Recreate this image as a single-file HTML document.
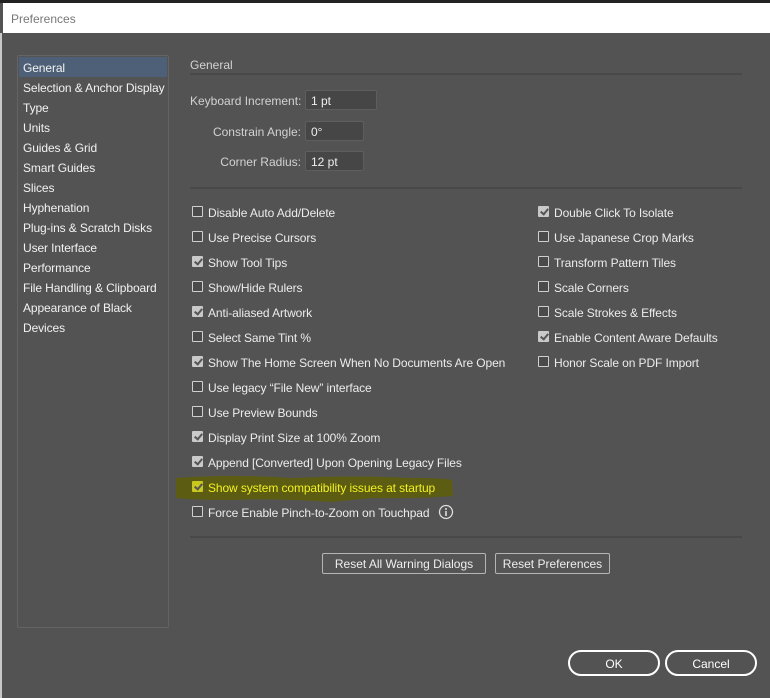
<!DOCTYPE html>
<html><head><meta charset="utf-8"><style>
*{margin:0;padding:0;box-sizing:border-box}
body{width:770px;height:698px;background:#535353;position:relative;overflow:hidden;font-family:"Liberation Sans",sans-serif;font-size:12px;color:#e3e3e3}
.a{position:absolute;white-space:nowrap}
#top{left:0;top:0;width:770px;height:3px;background:#222}
#title{left:3px;top:3px;width:767px;height:30px;background:#fff;color:#777;font-size:12px;padding:9px 0 0 8px}
#ledge{left:0;top:33px;width:2px;height:665px;background:#c8c8c8}
#side{left:17px;top:55px;width:152px;height:573px;border:1px solid #646464;border-radius:2px}
.si{position:absolute;left:5px;font-size:12px;letter-spacing:-0.1px;color:#f2f2f2;top:0}
#sel{left:1px;top:1px;width:148px;height:20px;background:#4d6077}
.lbl{color:#d2d2d2;letter-spacing:0}
.inp{background:#464646;border:1px solid #5e5e5e;border-radius:2px;height:20px;color:#eee;padding:3px 0 0 5px}
.line{height:2px;background:#484848}
.cb{position:absolute;width:11px;height:11px;border:1px solid #cfcfcf;background:#4a4a4a;border-radius:1px}
.cb.c{background:#c9c9c9;border-color:#c9c9c9}
.cb.c:after{content:"";position:absolute;left:3px;top:0px;width:3px;height:6px;border:solid #555;border-width:0 2px 2px 0;transform:rotate(40deg)}
.t{position:absolute;letter-spacing:-0.1px;color:#ececec}
.btn{position:absolute;border:1px solid #b5b5b5;border-radius:2px;text-align:center;padding-top:3px;color:#eee;background:#555}
.rb{position:absolute;border:2px solid #fff;border-radius:13px;text-align:center;color:#fff;padding-top:5px;font-size:12px}
</style></head><body>
<div class="a" id="top"></div>
<div class="a" id="title">Preferences</div>
<div class="a" id="ledge"></div>
<div class="a" id="side">
<div class="a" id="sel"></div>
<div class="si" style="top:5px">General</div>
<div class="si" style="top:25px">Selection &amp; Anchor Display</div>
<div class="si" style="top:45px">Type</div>
<div class="si" style="top:65px">Units</div>
<div class="si" style="top:85px">Guides &amp; Grid</div>
<div class="si" style="top:105px">Smart Guides</div>
<div class="si" style="top:125px">Slices</div>
<div class="si" style="top:145px">Hyphenation</div>
<div class="si" style="top:165px">Plug-ins &amp; Scratch Disks</div>
<div class="si" style="top:185px">User Interface</div>
<div class="si" style="top:205px">Performance</div>
<div class="si" style="top:225px">File Handling &amp; Clipboard</div>
<div class="si" style="top:245px">Appearance of Black</div>
<div class="si" style="top:265px">Devices</div>
</div>
<div class="a lbl" style="left:190px;top:58px">General</div>
<div class="a line" style="left:190px;top:73px;width:552px"></div>
<div class="a lbl" style="left:190px;top:94px;width:111px;text-align:right">Keyboard Increment:</div>
<div class="a inp" style="left:305px;top:90px;width:72px">1 pt</div>
<div class="a lbl" style="left:190px;top:125px;width:111px;text-align:right">Constrain Angle:</div>
<div class="a inp" style="left:305px;top:121px;width:59px">0°</div>
<div class="a lbl" style="left:190px;top:155px;width:111px;text-align:right">Corner Radius:</div>
<div class="a inp" style="left:305px;top:151px;width:59px">12 pt</div>
<div class="a line" style="left:190px;top:187px;width:552px"></div>

<svg class="a" style="left:172px;top:472px" width="285" height="32"><path d="M4 6 Q60 2 120 6 Q180 3 240 6 Q270 6 280 8 L281 24 Q240 27 200 26 L160 30 Q100 26 60 28 Q20 28 4 26 Z" fill="#5c5c12"/></svg>

<div class="cb" style="left:192px;top:206px"></div><div class="t" style="left:208px;top:206px">Disable Auto Add/Delete</div>
<div class="cb" style="left:192px;top:231px"></div><div class="t" style="left:208px;top:231px">Use Precise Cursors</div>
<div class="cb c" style="left:192px;top:256px"></div><div class="t" style="left:208px;top:256px">Show Tool Tips</div>
<div class="cb" style="left:192px;top:281px"></div><div class="t" style="left:208px;top:281px">Show/Hide Rulers</div>
<div class="cb c" style="left:192px;top:306px"></div><div class="t" style="left:208px;top:306px">Anti-aliased Artwork</div>
<div class="cb" style="left:192px;top:331px"></div><div class="t" style="left:208px;top:331px">Select Same Tint %</div>
<div class="cb c" style="left:192px;top:356px"></div><div class="t" style="left:208px;top:356px">Show The Home Screen When No Documents Are Open</div>
<div class="cb" style="left:192px;top:381px"></div><div class="t" style="left:208px;top:381px">Use legacy “File New” interface</div>
<div class="cb" style="left:192px;top:406px"></div><div class="t" style="left:208px;top:406px">Use Preview Bounds</div>
<div class="cb c" style="left:192px;top:431px"></div><div class="t" style="left:208px;top:431px">Display Print Size at 100% Zoom</div>
<div class="cb c" style="left:192px;top:456px"></div><div class="t" style="left:208px;top:456px">Append [Converted] Upon Opening Legacy Files</div>
<div class="cb c" style="left:192px;top:481px;background:#c8c820;border-color:#c8c820"></div><div class="t" style="left:208px;top:481px;color:#f2f220">Show system compatibility issues at startup</div>
<div class="cb" style="left:192px;top:506px"></div><div class="t" style="left:208px;top:506px">Force Enable Pinch-to-Zoom on Touchpad</div>
<svg class="a" style="left:438px;top:504px" width="16" height="16"><circle cx="8" cy="8" r="6.5" fill="none" stroke="#ddd" stroke-width="1.3"/><circle cx="8" cy="5" r="1" fill="#ddd"/><rect x="7.2" y="7" width="1.6" height="5" fill="#ddd"/></svg>

<div class="cb c" style="left:538px;top:206px"></div><div class="t" style="left:554px;top:206px">Double Click To Isolate</div>
<div class="cb" style="left:538px;top:231px"></div><div class="t" style="left:554px;top:231px">Use Japanese Crop Marks</div>
<div class="cb" style="left:538px;top:256px"></div><div class="t" style="left:554px;top:256px">Transform Pattern Tiles</div>
<div class="cb" style="left:538px;top:281px"></div><div class="t" style="left:554px;top:281px">Scale Corners</div>
<div class="cb" style="left:538px;top:306px"></div><div class="t" style="left:554px;top:306px">Scale Strokes &amp; Effects</div>
<div class="cb c" style="left:538px;top:331px"></div><div class="t" style="left:554px;top:331px">Enable Content Aware Defaults</div>
<div class="cb" style="left:538px;top:356px"></div><div class="t" style="left:554px;top:356px">Honor Scale on PDF Import</div>

<div class="a line" style="left:190px;top:536px;width:552px"></div>
<div class="btn" style="left:322px;top:553px;width:164px;height:21px">Reset All Warning Dialogs</div>
<div class="btn" style="left:495px;top:553px;width:115px;height:21px">Reset Preferences</div>
<div class="rb" style="left:568px;top:650px;width:92px;height:26px">OK</div>
<div class="rb" style="left:665px;top:650px;width:92px;height:26px">Cancel</div>
</body></html>
